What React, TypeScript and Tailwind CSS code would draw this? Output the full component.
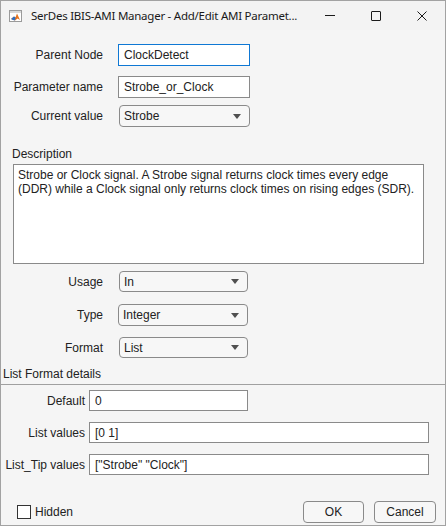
import React from "react";

function MatlabIcon() {
  return (
    <svg width="13" height="12" viewBox="0 0 13 12">
      <rect x="0.5" y="0.5" width="12" height="11" fill="#ffffff" stroke="#9a9a9a" />
      <rect x="1" y="1" width="11" height="2" fill="#d8d8d8" />
      <path d="M2 9 L5 6.5 L6.5 7.5 L8 3.5 L11 10 L8.5 8.5 L6 10.5 Z" fill="#e8731d" />
      <path d="M2 9 L5 6.5 L6.5 7.5 L6 10.5 L4 10 Z" fill="#2f6fc1" />
    </svg>
  );
}

function Arrow() {
  return (
    <svg width="8" height="5" viewBox="0 0 8 5" className="shrink-0">
      <path d="M0 0 L8 0 L4 5 Z" fill="#505050" />
    </svg>
  );
}

function Field({
  label,
  value,
  labelW,
  gap,
  width,
  h = "h-[22px]",
  focused = false,
}: {
  label: string;
  value: string;
  labelW: string;
  gap: string;
  width: string;
  h?: string;
  focused?: boolean;
}) {
  return (
    <div className={`flex items-center ${h}`}>
      <div className={`${labelW} text-right shrink-0`}>{label}</div>
      <div
        className={`${gap} ${width} h-full bg-white border flex items-center pl-[5px] ${
          focused ? "border-[#0f78d4]" : "border-[#8a8a8a]"
        }`}
      >
        {value}
      </div>
    </div>
  );
}

function Dropdown({
  label,
  value,
  gap,
  width,
  h = "h-[22px]",
}: {
  label: string;
  value: string;
  gap: string;
  width: string;
  h?: string;
}) {
  return (
    <div className={`flex items-center ${h}`}>
      <div className="w-[102px] text-right shrink-0">{label}</div>
      <div
        className={`${gap} ${width} h-full bg-[#f7f7f7] border border-[#8a8a8a] rounded-[4px] flex items-center justify-between pl-[4px] pr-[8px]`}
      >
        <span>{value}</span>
        <Arrow />
      </div>
    </div>
  );
}

export default function App() {
  return (
    <div className="w-[446px] h-[526px] bg-[#f5f5f5] border border-[#a2a2a2] flex flex-col font-['Liberation_Sans',Arial,sans-serif] text-[12px] text-[#222222] overflow-hidden">
      {/* title bar */}
      <div className="h-[29px] shrink-0 flex items-center bg-[#f3f3f3]">
        <div className="ml-[8px] mt-[1px]">
          <MatlabIcon />
        </div>
        <div className="ml-[9px] font-['Noto_Sans',sans-serif] text-[11.5px] tracking-[-0.25px] text-[#1a1a1a] whitespace-nowrap">
          SerDes IBIS-AMI Manager - Add/Edit AMI Paramet...
        </div>
        <div className="ml-auto flex h-full">
          <div className="w-[46px] h-full flex items-center justify-center">
            <div className="w-[10px] h-px bg-[#1a1a1a]" />
          </div>
          <div className="w-[46px] h-full flex items-center justify-center">
            <div className="w-[10px] h-[10px] border border-[#1a1a1a] rounded-[1px]" />
          </div>
          <div className="w-[46px] h-full flex items-center justify-center">
            <svg width="10" height="10" viewBox="0 0 10 10">
              <path d="M0.5 0.5 L9.5 9.5 M9.5 0.5 L0.5 9.5" stroke="#1a1a1a" strokeWidth="1" />
            </svg>
          </div>
        </div>
      </div>

      {/* body */}
      <div className="flex flex-col">
        <div className="mt-[14px]">
          <Field label="Parent Node" value="ClockDetect" labelW="w-[102px]" gap="ml-[15px]" width="w-[132px]" focused />
        </div>
        <div className="mt-[10px]">
          <Field label="Parameter name" value="Strobe_or_Clock" labelW="w-[102px]" gap="ml-[15px]" width="w-[132px]" />
        </div>
        <div className="mt-[7px]">
          <Dropdown label="Current value" value="Strobe" gap="ml-[16px]" width="w-[131px]" />
        </div>

        <div className="mt-[20px] h-[14px] leading-[14px] ml-[11px]">Description</div>
        <div className="mt-[3px] ml-[12px] w-[411px] h-[100px] bg-white border border-[#8a8a8a] px-[4px] pt-[3px] leading-[14px]">
          Strobe or Clock signal. A Strobe signal returns clock times every edge (DDR) while a Clock signal only returns clock times on rising edges (SDR).
        </div>

        <div className="mt-[7px]">
          <Dropdown label="Usage" value="In" gap="ml-[16px]" width="w-[129px]" h="h-[21px]" />
        </div>
        <div className="mt-[12px]">
          <Dropdown label="Type" value="Integer" gap="ml-[15px]" width="w-[130px]" />
        </div>
        <div className="mt-[11px]">
          <Dropdown label="Format" value="List" gap="ml-[16px]" width="w-[129px]" h="h-[21px]" />
        </div>

        <div className="mt-[9px] h-[14px] leading-[14px] ml-[2px]">List Format details</div>
        <div className="mt-[3px] h-px bg-[#a0a0a0]" />

        <div className="mt-[5px]">
          <Field label="Default" value="0" labelW="w-[84px]" gap="ml-[4px]" width="w-[159px]" h="h-[21px]" />
        </div>
        <div className="mt-[11px]">
          <Field label="List values" value="[0 1]" labelW="w-[84px]" gap="ml-[4px]" width="w-[340px]" h="h-[21px]" />
        </div>
        <div className="mt-[11px]">
          <Field label="List_Tip values" value={'["Strobe" "Clock"]'} labelW="w-[84px]" gap="ml-[4px]" width="w-[340px]" h="h-[21px]" />
        </div>

        <div className="mt-[26px] h-[22px] flex items-center">
          <div className="ml-[16px] w-[14px] h-[14px] bg-white border border-[#333333]" />
          <span className="ml-[4px]">Hidden</span>
          <div className="ml-auto w-[61px] h-full border border-[#8a8a8a] rounded-[4px] bg-[#f7f7f7] flex items-center justify-center">
            OK
          </div>
          <div className="ml-[10px] mr-[9px] w-[62px] h-full border border-[#8a8a8a] rounded-[4px] bg-[#f7f7f7] flex items-center justify-center">
            Cancel
          </div>
        </div>
      </div>
    </div>
  );
}
